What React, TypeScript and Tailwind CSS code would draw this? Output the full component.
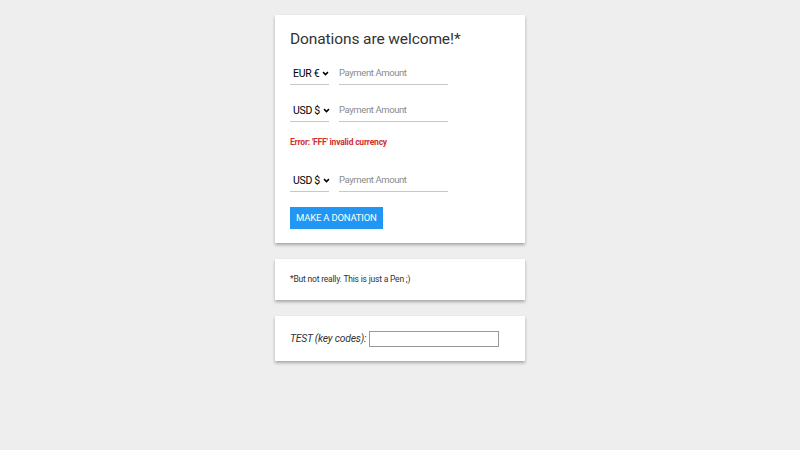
import React from "react";

type Row = { currency: string; error?: string };

const rows: Row[] = [
  { currency: "EUR €" },
  { currency: "USD $", error: "Error: 'FFF' invalid currency" },
  { currency: "USD $" },
];

function Chevron() {
  return (
    <svg viewBox="0 0 10 10" className="h-[7px] w-[7px] shrink-0" fill="none" stroke="currentColor" strokeWidth="2.2">
      <path d="M1.5 3 L5 6.5 L8.5 3" />
    </svg>
  );
}

function PaymentRow({ currency, error }: Row) {
  return (
    <div>
      <div className="flex items-end gap-[10px]">
        <div className="flex h-[22px] w-[39px] shrink-0 items-center gap-[3px] whitespace-nowrap border-b border-[#c8c8c8] pl-[3px] text-[10.5px] tracking-[-0.3px] text-black">
          <span>{currency}</span>
          <Chevron />
        </div>
        <div className="flex h-[22px] w-[109px] shrink-0 items-center whitespace-nowrap border-b border-[#c8c8c8] text-[9.5px] tracking-[-0.4px] text-[#8a8a8a]">
          Payment Amount
        </div>
      </div>
      {error && (
        <div className="mt-[15px] whitespace-nowrap text-[8.5px] font-bold leading-[10px] tracking-[-0.2px] text-[#d32f2f]">{error}</div>
      )}
    </div>
  );
}

export default function App() {
  return (
    <div
      className="min-h-[450px] w-full bg-[#eeeeee] pt-[15px]"
      style={{ fontFamily: "Roboto, 'Liberation Sans', sans-serif" }}
    >
      <div className="mx-auto flex w-[250px] flex-col gap-[16px]">
        {/* main card */}
        <div className="bg-white px-[15px] pb-[14px] pt-[14px] shadow-[0_2px_3px_rgba(0,0,0,0.3)]">
          <h1 className="whitespace-nowrap text-[15.5px] leading-[20px] tracking-[-0.1px] text-[#333]">Donations are welcome!*</h1>
          <div className="mt-[14px] flex flex-col gap-[15px]">
            <PaymentRow {...rows[0]} />
            <PaymentRow {...rows[1]} />
            <div className="mt-[8px]">
              <PaymentRow {...rows[2]} />
            </div>
          </div>
          <button className="mt-[15px] h-[22px] whitespace-nowrap bg-[#2196f3] px-[6px] text-[9.5px] tracking-[-0.2px] text-white">
            MAKE A DONATION
          </button>
        </div>

        {/* note card */}
        <div className="flex h-[41px] items-center whitespace-nowrap bg-white px-[15px] text-[8.5px] tracking-[-0.2px] text-[#333] shadow-[0_2px_3px_rgba(0,0,0,0.3)]">
          *But not really. This is just a Pen ;)
        </div>

        {/* test card */}
        <div className="flex h-[45px] items-center gap-[3px] bg-white px-[15px] shadow-[0_2px_3px_rgba(0,0,0,0.3)]">
          <span className="whitespace-nowrap text-[10.3px] italic tracking-[-0.2px] text-[#333]">TEST (key codes):</span>
          <input className="h-[16px] w-[130px] shrink-0 border border-[#999] bg-white outline-none" />
        </div>
      </div>
    </div>
  );
}
